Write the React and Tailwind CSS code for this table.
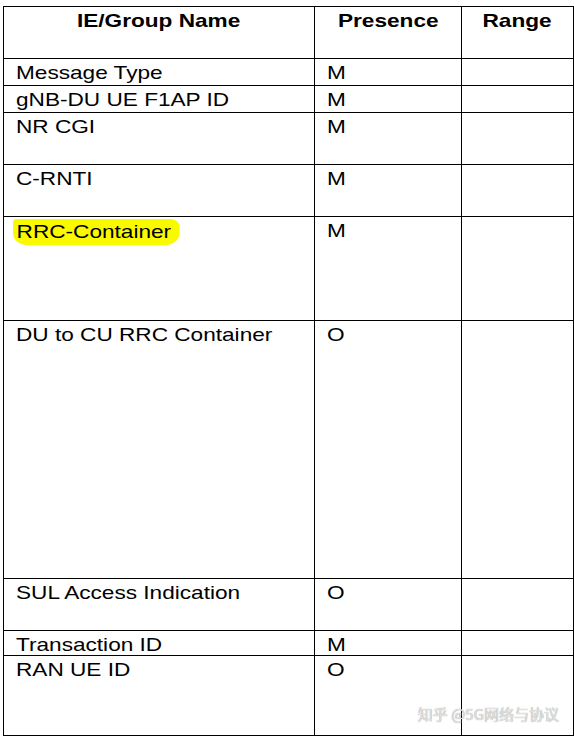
import React from 'react'

const rows = [
  { name: 'Message Type', presence: 'M', h: 'h-[27px]' },
  { name: 'gNB-DU UE F1AP ID', presence: 'M', h: 'h-[27px]' },
  { name: 'NR CGI', presence: 'M', h: 'h-[52px]' },
  { name: 'C-RNTI', presence: 'M', h: 'h-[52px]' },
  { name: 'RRC-Container', presence: 'M', h: 'h-[104px]', highlight: true },
  { name: 'DU to CU RRC Container', presence: 'O', h: 'h-[258px]' },
  { name: 'SUL Access Indication', presence: 'O', h: 'h-[52px]' },
  { name: 'Transaction ID', presence: 'M', h: 'h-[25px]' },
  { name: 'RAN UE ID', presence: 'O', h: 'h-[80px]' },
]

// text in the shot is stretched sideways, so widen glyphs a bit
function Txt({ children, bold, center }) {
  return (
    <span
      className={`inline-block scale-x-[1.19] whitespace-nowrap ${center ? 'origin-center' : 'origin-left'} ${bold ? 'font-bold' : ''}`}
    >
      {children}
    </span>
  )
}

export default function App() {
  return (
    <div className="w-[574px] h-[739px] bg-white text-black overflow-hidden font-['Liberation_Sans',Arial,sans-serif] text-[19px] leading-[26px]">
      <div className="relative ml-[3px] mt-[6px] w-[571px] border-l border-t border-black grid grid-cols-[311px_147px_112px]">
        {/* header */}
        <div className="h-[52px] border-r border-b border-black pt-[1px] text-center">
          <Txt bold center>IE/Group Name</Txt>
        </div>
        <div className="h-[52px] border-r border-b border-black pt-[1px] text-center">
          <Txt bold center>Presence</Txt>
        </div>
        <div className="h-[52px] border-r border-b border-black pt-[1px] text-center">
          <Txt bold center>Range</Txt>
        </div>

        {rows.map((r) => (
          <React.Fragment key={r.name}>
            <div className={`${r.h} border-r border-b border-black pl-[12px] pt-[1px]`}>
              {r.highlight ? (
                <span className="inline-block origin-left scale-x-[1.19] -ml-[3px] mt-[1px] pl-[3px] pr-[7px] leading-[26px] bg-[#f9f900] rounded-tl-[3px] rounded-tr-[8px] rounded-b-[12px] whitespace-nowrap">
                  RRC-Container
                </span>
              ) : (
                <Txt>{r.name}</Txt>
              )}
            </div>
            <div className={`${r.h} border-r border-b border-black pl-[12px] pt-[1px]`}>
              <Txt>{r.presence}</Txt>
            </div>
            <div className={`${r.h} border-r border-b border-black`} />
          </React.Fragment>
        ))}

        {/* watermark */}
        <div className="absolute right-[15px] bottom-[13px] text-[15px] leading-[18px] text-[#e2e2e2] font-['Noto_Sans_CJK_SC',sans-serif] [text-shadow:0_0_1px_#8a8a8a] whitespace-nowrap">
          知乎 @5G网络与协议
        </div>
      </div>
    </div>
  )
}
